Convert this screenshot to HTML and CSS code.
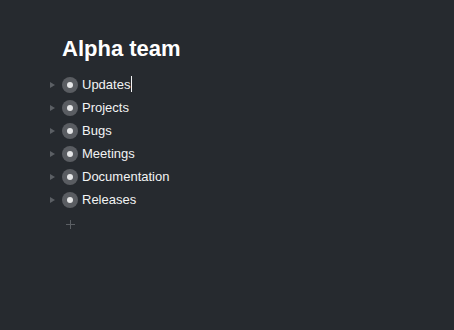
FILE: index.html
```html
<!DOCTYPE html>
<html lang="en">
<head>
    <meta charset="UTF-8">
    <meta name="viewport" content="width=device-width, initial-scale=1.0">
    <title>Alpha team</title>
    <link rel="stylesheet" href="styles.css">
</head>
<body>
    <div class="page">
        <h1 class="title">Alpha team</h1>

        <ul class="outline">
            <li class="node">
                <span class="toggle"></span>
                <span class="bullet"><span class="dot"></span></span>
                <span class="label">Updates<span class="caret"></span></span>
            </li>
            <li class="node">
                <span class="toggle"></span>
                <span class="bullet"><span class="dot"></span></span>
                <span class="label">Projects</span>
            </li>
            <li class="node">
                <span class="toggle"></span>
                <span class="bullet"><span class="dot"></span></span>
                <span class="label">Bugs</span>
            </li>
            <li class="node">
                <span class="toggle"></span>
                <span class="bullet"><span class="dot"></span></span>
                <span class="label">Meetings</span>
            </li>
            <li class="node">
                <span class="toggle"></span>
                <span class="bullet"><span class="dot"></span></span>
                <span class="label">Documentation</span>
            </li>
            <li class="node">
                <span class="toggle"></span>
                <span class="bullet"><span class="dot"></span></span>
                <span class="label">Releases</span>
            </li>
        </ul>

        <div class="add-row">
            <svg class="add" width="9" height="9" viewBox="0 0 9 9">
                <path d="M4.5 0 V9 M0 4.5 H9" stroke="#5b5f64" stroke-width="1" fill="none"/>
            </svg>
        </div>
    </div>
</body>
</html>
```

FILE: styles.css
```css
html, body {
    margin: 0;
    padding: 0;
    background-color: #262a2f;
    height: 100%;
}
body {
    font-family: "Liberation Sans", Arial, sans-serif;
    color: #f2f3f4;
}
.page {
    padding: 35px 0 0 48px;
}
.title {
    font-size: 22px;
    font-weight: bold;
    line-height: 28px;
    margin: 0 0 10px 14px;
    color: #ffffff;
}
.outline {
    list-style: none;
    margin: 0;
    padding: 0;
}
.node {
    display: flex;
    align-items: center;
    height: 23px;
}
.toggle {
    width: 14px;
    height: 23px;
    position: relative;
}
.toggle::before {
    content: "";
    position: absolute;
    left: 2px;
    top: 9px;
    border-left: 5px solid #5b5f64;
    border-top: 3px solid transparent;
    border-bottom: 3px solid transparent;
}
.bullet {
    width: 16px;
    height: 16px;
    border-radius: 50%;
    background-color: #5a5d62;
    display: flex;
    align-items: center;
    justify-content: center;
}
.dot {
    width: 6px;
    height: 6px;
    border-radius: 50%;
    background-color: #e6e7e8;
}
.label {
    margin-left: 4px;
    font-size: 13px;
    line-height: 16px;
    position: relative;
}
.caret {
    position: absolute;
    right: -2px;
    top: -1px;
    width: 1px;
    height: 16px;
    background-color: #f2f3f4;
}
.add-row {
    display: flex;
    padding: 9px 0 0 18px;
}
```
